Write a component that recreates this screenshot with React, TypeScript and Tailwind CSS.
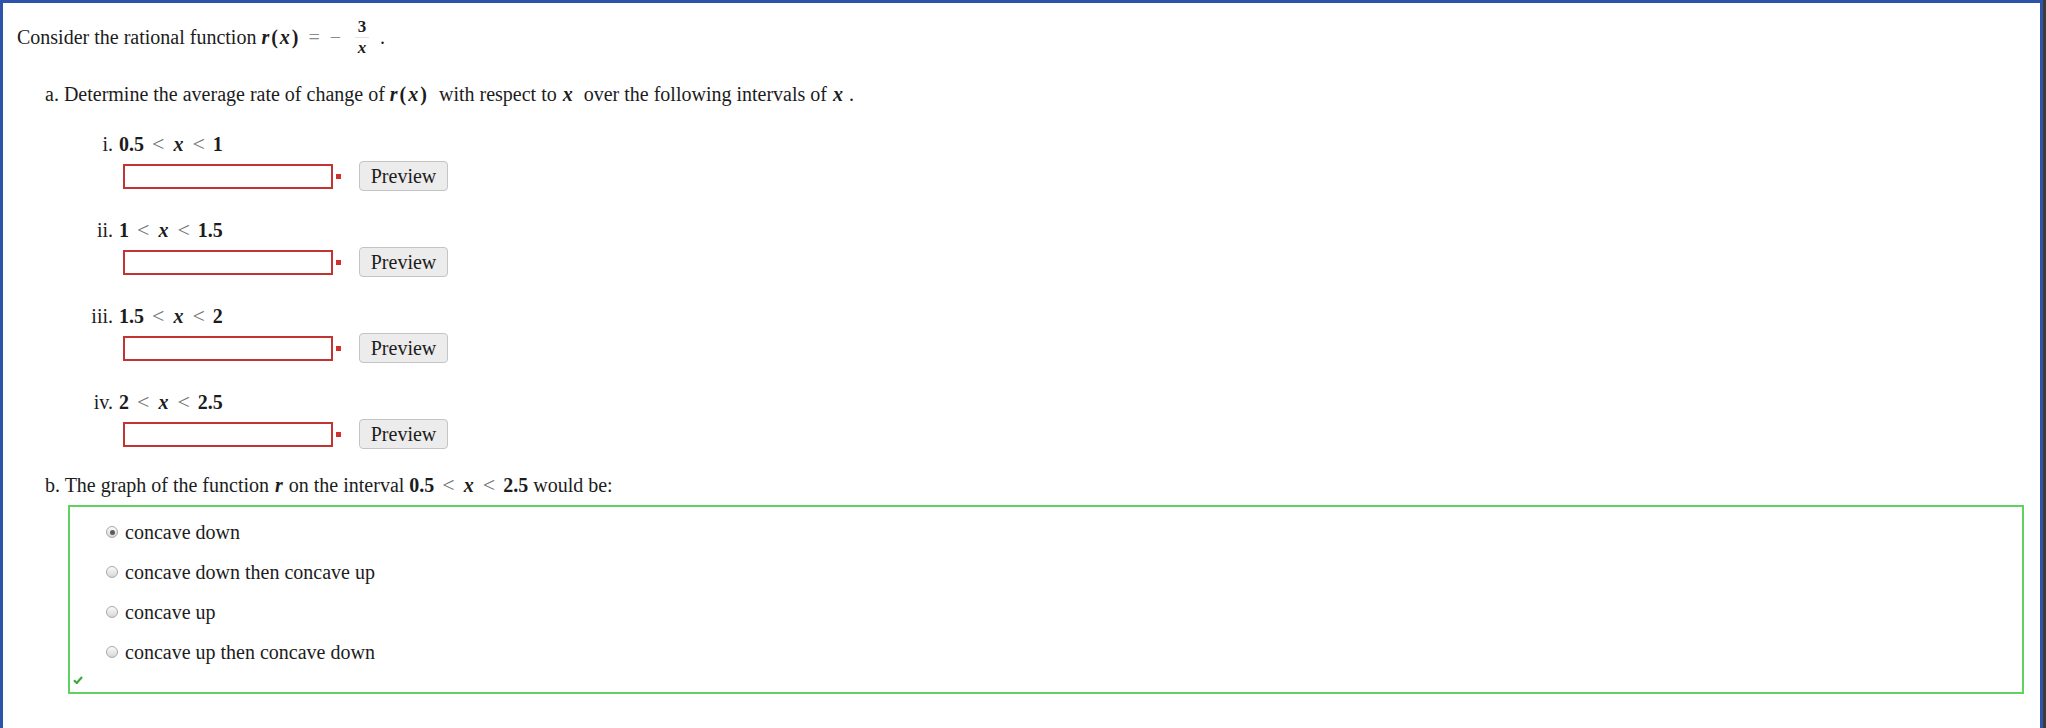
import React from "react";

type Kids = { children: React.ReactNode };

function V({ children }: Kids) {
  return <span className="px-[1px] font-bold italic">{children}</span>;
}

function N({ children }: Kids) {
  return <span className="font-bold">{children}</span>;
}

function Lt() {
  return <span className="mx-[8px] text-[22px] text-[#707070]">&lt;</span>;
}

function Rx() {
  return (
    <span className="font-bold tracking-[2px]">
      <span className="italic">r</span>(<span className="italic">x</span>)
    </span>
  );
}

const intervals = [
  { mark: "i.", math: ["0.5", "1"] },
  { mark: "ii.", math: ["1", "1.5"] },
  { mark: "iii.", math: ["1.5", "2"] },
  { mark: "iv.", math: ["2", "2.5"] },
];

const choices = [
  "concave down",
  "concave down then concave up",
  "concave up",
  "concave up then concave down",
];

function Radio({ checked }: { checked?: boolean }) {
  return (
    <span className="flex h-[12px] w-[12px] shrink-0 items-center justify-center rounded-full border border-[#a9a9a9] bg-gradient-to-b from-[#fbfbfb] to-[#d6d6d6]">
      {checked && <span className="h-[5px] w-[5px] rounded-full bg-[#5c5c5c]" />}
    </span>
  );
}

export default function App() {
  return (
    <div className="flex min-h-screen w-full bg-[#3c3c3c]">
      <div className="min-h-screen w-[2043px] shrink-0 border-l-[3px] border-r-[3px] border-t-[3px] border-[#2b54aa] bg-white pl-[14px] pt-[9px] font-['Liberation_Serif','Times_New_Roman',serif] text-[20px] leading-6 text-[#1c1c1c]">
        {/* intro line with fraction */}
        <div className="flex h-[50px] items-center whitespace-pre">
          <span>Consider the rational function </span>
          <Rx />
          <span className="ml-[8px] text-[#8c8c8c]">=</span>
          <span className="ml-[10px] text-[#8c8c8c]">−</span>
          <span className="ml-[14px] inline-flex flex-col items-center text-[17px] font-bold leading-none">
            <span className="flex h-[20px] items-center">3</span>
            <span className="h-px w-[14px] bg-[#e2e2e2]" />
            <span className="flex h-[20px] items-center italic">x</span>
          </span>
          <span className="ml-[11px]">.</span>
        </div>

        <div className="mt-[20px] ml-[28px] whitespace-pre">
          a. Determine the average rate of change of <Rx />
          {"  with respect to "}
          <V>x</V>
          {"  over the following intervals of "}
          <V>x</V>
          {" ."}
        </div>

        <div className="mt-[26px] flex flex-col gap-[27px]">
          {intervals.map((it) => (
            <div key={it.mark} className="flex">
              <span className="w-[96px] shrink-0 text-right">{it.mark}</span>
              <div className="ml-[6px] flex flex-col gap-[5px]">
                <div className="h-6">
                  <N>{it.math[0]}</N>
                  <Lt />
                  <V>x</V>
                  <Lt />
                  <N>{it.math[1]}</N>
                </div>
                <div className="ml-[4px] flex h-[30px] items-center">
                  <input
                    type="text"
                    className="h-[25px] w-[210px] border-2 border-[#c23434] bg-white outline-none"
                  />
                  <span className="ml-[3px] h-[5px] w-[5px] bg-[#d42f2f]" />
                  <button
                    type="button"
                    className="ml-[18px] h-[30px] w-[89px] rounded-[4px] border border-[#c4c4c4] bg-[#ececec] text-[20px] text-[#1c1c1c]"
                  >
                    Preview
                  </button>
                </div>
              </div>
            </div>
          ))}
        </div>

        <div className="mt-[24px] ml-[28px] whitespace-pre">
          {"b. The graph of the function "}
          <V>r</V>
          {" on the interval "}
          <N>0.5</N>
          <Lt />
          <V>x</V>
          <Lt />
          <N>2.5</N>
          {" would be:"}
        </div>

        <div className="mt-[8px] ml-[51px] w-[1956px] border-2 border-[#5fd35f] pl-[36px] pt-[5px] pb-[8px]">
          {choices.map((c, i) => (
            <label key={c} className="flex h-[40px] items-center gap-[7px]">
              <Radio checked={i === 0} />
              <span>{c}</span>
            </label>
          ))}
          <div className="-ml-[33px] mt-[4px] h-[8px]">
            <svg width="10" height="8" viewBox="0 0 10 8">
              <path d="M1 4.2 L3.8 7 L9 1" fill="none" stroke="#3ea83e" strokeWidth="2.2" />
            </svg>
          </div>
        </div>
      </div>
      <div className="w-[3px] shrink-0 bg-[#3c3c3c]" />
    </div>
  );
}
